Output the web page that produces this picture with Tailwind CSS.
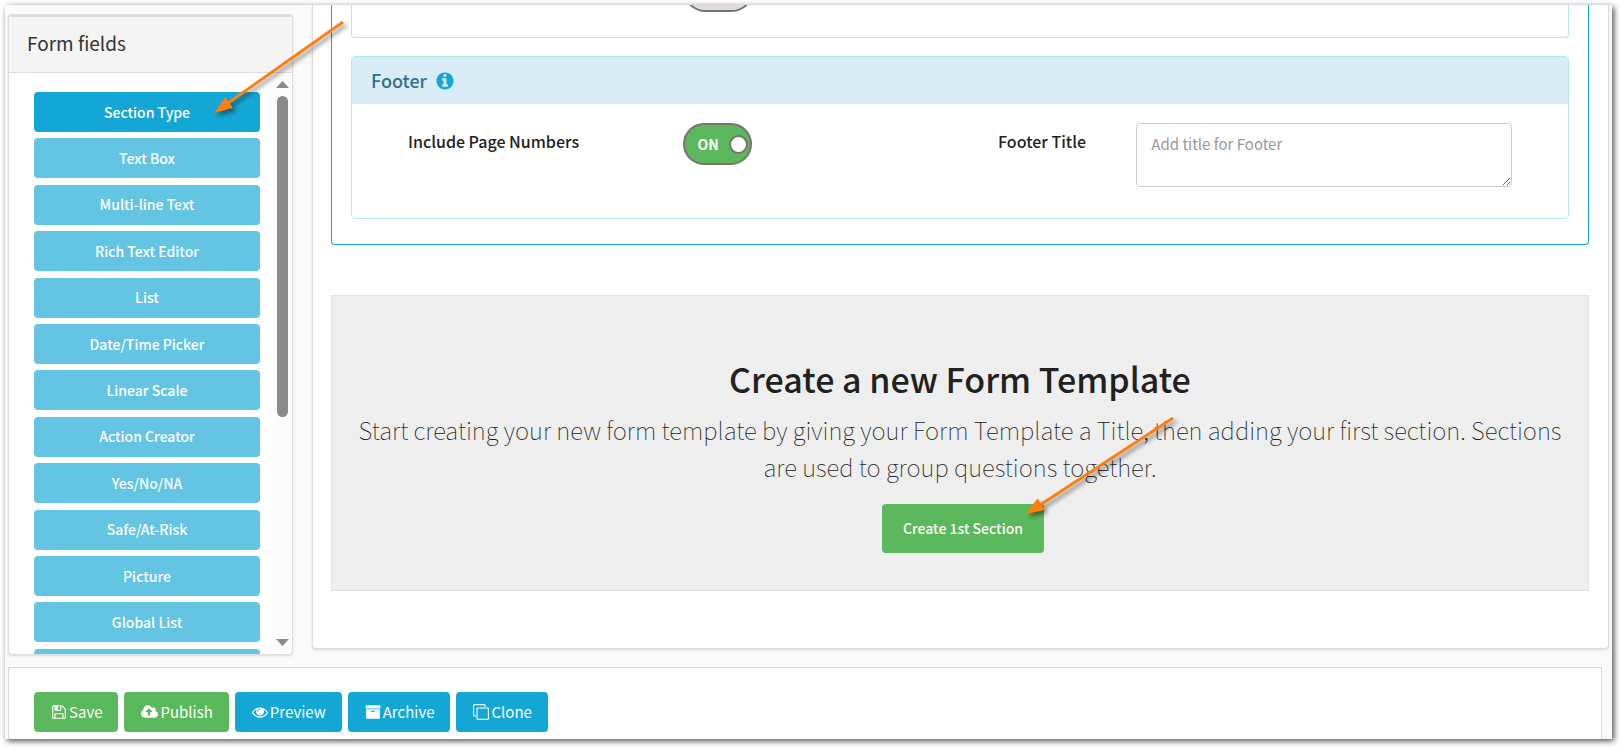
<!DOCTYPE html>
<html lang="en">
<head>
  <meta charset="UTF-8" />
  <meta name="viewport" content="width=device-width, initial-scale=1" />
  <title>Form Template</title>
  <script src="https://cdn.jsdelivr.net/npm/@tailwindcss/browser@4"></script>
</head>
<body class="relative h-screen overflow-hidden bg-white pt-[5px] pr-[9px] pb-[9px] pl-[5px] font-['Noto_Sans_CJK_SC','Open_Sans',sans-serif] text-[15px] text-[#212121]">
  <div class="flex h-full flex-col overflow-hidden bg-[#fafafa] shadow-[2px_2px_6px_0px_rgba(0,0,0,0.7)]">
    <div class="flex shrink-0 items-start gap-[19px] pl-[3px] pr-[3px]">

      <!-- Field palette -->
      <aside class="mt-[9px] w-[285px] shrink-0 overflow-hidden rounded-[4px] border border-t-[3px] border-[#ddd] bg-white shadow-sm">
        <h2 class="h-14 border-b border-[#ddd] bg-[#f4f4f4] px-[18px] text-[19px] leading-[52px] text-[#333]">Form fields</h2>
        <div class="flex h-[581px] items-start overflow-hidden">
          <div class="flex h-[616px] flex-1 flex-col justify-between pt-[19px] pl-[25px] pr-[13px] text-[14px] font-medium text-white">
            <button type="button" class="h-10 rounded-[4px] bg-[#14a7d5]">Section Type</button>
            <button type="button" class="h-10 rounded-[4px] bg-[#64c4e3]">Text Box</button>
            <button type="button" class="h-10 rounded-[4px] bg-[#64c4e3]">Multi-line Text</button>
            <button type="button" class="h-10 rounded-[4px] bg-[#64c4e3]">Rich Text Editor</button>
            <button type="button" class="h-10 rounded-[4px] bg-[#64c4e3]">List</button>
            <button type="button" class="h-10 rounded-[4px] bg-[#64c4e3]">Date/Time Picker</button>
            <button type="button" class="h-10 rounded-[4px] bg-[#64c4e3]">Linear Scale</button>
            <button type="button" class="h-10 rounded-[4px] bg-[#64c4e3]">Action Creator</button>
            <button type="button" class="h-10 rounded-[4px] bg-[#64c4e3]">Yes/No/NA</button>
            <button type="button" class="h-10 rounded-[4px] bg-[#64c4e3]">Safe/At-Risk</button>
            <button type="button" class="h-10 rounded-[4px] bg-[#64c4e3]">Picture</button>
            <button type="button" class="h-10 rounded-[4px] bg-[#64c4e3]">Global List</button>
            <button type="button" class="h-10 rounded-[4px] bg-[#64c4e3]" aria-label="More"></button>
          </div>
          <div class="flex h-full w-[19px] flex-col items-center bg-[#fcfcfc] py-2">
            <svg class="h-[7px] w-[13px] shrink-0" viewBox="0 0 13 7" fill="#8b8b8b"><path d="M0 7 6.500 0 13 7z"/></svg>
            <div class="mt-2 h-[321px] w-[11px] rounded-full bg-[#8b8b8b]"></div>
            <svg class="mt-auto h-[7px] w-[13px] shrink-0" viewBox="0 0 13 7" fill="#8b8b8b"><path d="M0 0 6.500 7 13 0z"/></svg>
          </div>
        </div>
      </aside>

      <!-- Template canvas -->
      <main class="min-w-0 flex-1 rounded-b-[4px] border border-t-0 border-[#ddd] bg-white pr-[19px] pb-[57px] pl-[18px] shadow-sm">
        <section class="rounded-b-[4px] border border-t-0 border-[#14a7d5] px-[19px] pb-[25px]">
          <div class="flex h-[33px] items-end overflow-hidden rounded-b-[4px] border border-t-0 border-[#b6e6f1] pb-[25px] pl-[332px]">
            <label class="flex h-[42px] w-[69px] shrink-0 items-center rounded-full border-2 border-[#7b706e] bg-[#e0dcdb] px-[3px]">
              <input type="checkbox" aria-label="Include header" class="size-[19px] appearance-none rounded-full border-2 border-[#7b706e] bg-white" />
            </label>
          </div>

          <div class="mt-[18px] overflow-hidden rounded-[4px] border border-[#b6e6f1]">
            <h3 class="flex h-[47px] items-center gap-2 bg-[#d9edf6] px-[19px] text-[18px] font-medium text-[#31708f]">
              Footer
              <svg class="size-5" viewBox="0 0 1792 1792" fill="#14a7d5"><path d="M1152 1376v-160q0-14-9-23t-23-9h-96v-512q0-14-9-23t-23-9h-320q-14 0-23 9t-9 23v160q0 14 9 23t23 9h96v320h-96q-14 0-23 9t-9 23v160q0 14 9 23t23 9h448q14 0 23-9t9-23zm-128-896v-160q0-14-9-23t-23-9h-192q-14 0-23 9t-9 23v160q0 14 9 23t23 9h192q14 0 23-9t9-23zm640 416q0 209-103 385.500t-279.500 279.500-385.500 103-385.500-103-279.500-279.500-103-385.500 103-385.500 279.500-279.500 385.500-103 385.500 103 279.500 279.500 103 385.500z"/></svg>
            </h3>
            <div class="grid grid-cols-[275fr_314fr_138fr_375fr] items-start bg-white px-14 pt-[19px] pb-[31px]">
              <label for="page-numbers" class="pt-1.5 text-[16px] font-medium leading-6">Include Page Numbers</label>
              <label class="flex h-[42px] w-[69px] items-center justify-between rounded-full border-2 border-[#7b706e] bg-[#5cb85c] pr-0.5 pl-3 text-[14px] font-bold text-white">
                ON
                <input id="page-numbers" type="checkbox" checked class="size-[19px] appearance-none rounded-full border-2 border-[#7b706e] bg-white" />
              </label>
              <label for="footer-title" class="pt-1.5 text-[16px] font-medium leading-6">Footer Title</label>
              <textarea id="footer-title" placeholder="Add title for Footer" class="block h-16 w-full resize rounded-[4px] border border-[#ccc] px-[14px] py-2 leading-6 placeholder:text-[#999]"></textarea>
            </div>
          </div>
        </section>

        <section class="mt-[50px] border border-[#dce6e8] bg-[#eee] px-5 pt-[59px] pb-[37px] text-center">
          <h1 class="text-[34px] font-medium leading-[48px]">Create a new Form Template</h1>
          <p class="mt-2 text-[24px] font-thin leading-[37px]">Start creating your new form template by giving your Form Template a Title, then adding your first section. Sections are used to group questions together.</p>
          <button type="button" class="mt-[19px] ml-1.5 h-[49px] rounded-[4px] bg-[#5cb85c] px-[21px] text-[14px] font-medium text-white">Create 1st Section</button>
        </section>
      </main>
    </div>

    <!-- Actions -->
    <footer class="mt-3 mr-[10px] ml-[3px] flex flex-1 items-start gap-1.5 border border-b-0 border-[#d8d8d8] bg-white pt-6 pl-[25px] text-white">
      <button type="button" class="flex h-10 items-center gap-0.5 rounded-[4px] bg-[#5cb85c] pr-4 pl-[17px]">
        <svg class="size-4" viewBox="0 0 1792 1792" fill="currentColor"><path d="M512 1536h768v-384h-768v384zm896 0h128v-896q0-14-10-38.500t-20-34.500l-281-281q-10-10-34-20t-39-10v416q0 40-28 68t-68 28h-576q-40 0-68-28t-28-68v-416h-128v1280h128v-416q0-40 28-68t68-28h832q40 0 68 28t28 68v416zm-384-928v-320q0-13-9.500-22.500t-22.500-9.500h-192q-13 0-22.500 9.500t-9.500 22.500v320q0 13 9.500 22.500t22.500 9.500h192q13 0 22.500-9.500t9.500-22.500zm640 32v928q0 40-28 68t-68 28h-1344q-40 0-68-28t-28-68v-1344q0-40 28-68t68-28h928q40 0 88 20t76 48l280 280q28 28 48 76t20 88z"/></svg>
        Save
      </button>
      <button type="button" class="flex h-10 items-center gap-0.5 rounded-[4px] bg-[#5cb85c] pr-4 pl-[17px]">
        <svg class="h-4 w-[17px]" viewBox="0 0 1920 1792" fill="currentColor"><path d="M1280 864q0-14-9-23l-352-352q-9-9-23-9t-23 9l-351 351q-10 12-10 24 0 14 9 23t23 9h224v352q0 13 9.500 22.500t22.500 9.500h192q13 0 22.500-9.500t9.500-22.500v-352h224q13 0 22.500-9.500t9.500-22.500zm640 288q0 159-112.500 271.500t-271.500 112.500h-1088q-185 0-316.500-131.500t-131.500-316.500q0-130 70-240t188-165q-2-30-2-43 0-212 150-362t362-150q156 0 285.500 87t188.500 231q71-62 166-62 106 0 181 75t75 181q0 76-41 138 130 31 213.500 135.500t83.500 238.500z"/></svg>
        Publish
      </button>
      <button type="button" class="flex h-10 items-center gap-0.5 rounded-[4px] bg-[#14a7d5] pr-4 pl-[17px]">
        <svg class="size-4" viewBox="0 0 1792 1792" fill="currentColor"><path d="M1664 960q-152-236-381-353 61 104 61 225 0 185-131.500 316.500t-316.500 131.500-316.500-131.500-131.500-316.500q0-121 61-225-229 117-381 353 133 205 333.500 326.500t434.500 121.500 434.500-121.500 333.500-326.500zm-720-384q0-20-14-34t-34-14q-125 0-214.500 89.500t-89.500 214.500q0 20 14 34t34 14 34-14 14-34q0-86 61-147t147-61q20 0 34-14t14-34zm848 384q0 34-20 69-140 230-376.500 368.500t-499.500 138.500-499.500-139-376.500-368q-20-35-20-69t20-69q140-229 376.500-368t499.500-139 499.500 139 376.500 368q20 35 20 69z"/></svg>
        Preview
      </button>
      <button type="button" class="flex h-10 items-center gap-0.5 rounded-[4px] bg-[#14a7d5] pr-4 pl-[17px]">
        <svg class="size-4" viewBox="0 0 1792 1792" fill="currentColor"><path d="M1088 832q0-26-19-45t-45-19h-256q-26 0-45 19t-19 45 19 45 45 19h256q26 0 45-19t19-45zm576-192v960q0 26-19 45t-45 19h-1408q-26 0-45-19t-19-45v-960q0-26 19-45t45-19h1408q26 0 45 19t19 45zm64-448v256q0 26-19 45t-45 19h-1536q-26 0-45-19t-19-45v-256q0-26 19-45t45-19h1536q26 0 45 19t19 45z"/></svg>
        Archive
      </button>
      <button type="button" class="flex h-10 items-center gap-0.5 rounded-[4px] bg-[#14a7d5] pr-4 pl-[17px]">
        <svg class="size-4" viewBox="0 0 1792 1792" fill="currentColor"><path d="M1664 1632v-1088q0-13-9.500-22.500t-22.500-9.500h-1088q-13 0-22.500 9.500t-9.500 22.500v1088q0 13 9.500 22.500t22.500 9.500h1088q13 0 22.500-9.500t9.500-22.500zm128-1088v1088q0 66-47 113t-113 47h-1088q-66 0-113-47t-47-113v-1088q0-66 47-113t113-47h1088q66 0 113 47t47 113zm-384-384v160h-128v-160q0-13-9.500-22.500t-22.500-9.500h-1088q-13 0-22.500 9.500t-9.500 22.500v1088q0 13 9.500 22.500t22.500 9.500h160v128h-160q-66 0-113-47t-47-113v-1088q0-66 47-113t113-47h1088q66 0 113 47t47 113z"/></svg>
        Clone
      </button>
    </footer>
  </div>

  <!-- Callout arrows -->
  <svg class="pointer-events-none absolute top-[15px] left-[210px] h-[110px] w-[145px] drop-shadow-[3px_3px_2px_rgba(0,0,0,0.45)]" viewBox="210 15 145 110">
    <path d="M343 22 228 103" stroke="#ff7f0e" stroke-width="3"/>
    <path d="M214 113 225.500 97 233 108z" fill="#ff7f0e"/>
  </svg>
  <svg class="pointer-events-none absolute top-[410px] left-[1020px] h-[115px] w-[165px] drop-shadow-[3px_3px_2px_rgba(0,0,0,0.45)]" viewBox="1020 410 165 115">
    <path d="M1173 418 1040 505" stroke="#ff7f0e" stroke-width="3"/>
    <path d="M1025.500 514 1037.500 498.500 1045 510z" fill="#ff7f0e"/>
  </svg>
</body>
</html>
